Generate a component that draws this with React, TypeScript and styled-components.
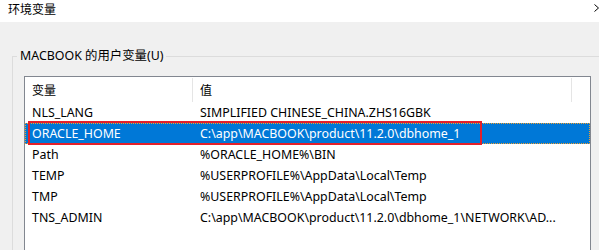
import React from 'react';
import styled, { createGlobalStyle } from 'styled-components';

const GlobalStyle = createGlobalStyle`
  html, body {
    margin: 0;
    padding: 0;
    background: #f0f0f0;
  }
  body {
    font-family: 'Noto Sans', 'Noto Sans CJK SC', sans-serif;
    font-size: 12.4px;
    color: #000;
  }
`;

interface Variable {
  name: string;
  value: string;
}

const variables: Variable[] = [
  { name: 'NLS_LANG', value: 'SIMPLIFIED CHINESE_CHINA.ZHS16GBK' },
  { name: 'ORACLE_HOME', value: 'C:\\app\\MACBOOK\\product\\11.2.0\\dbhome_1' },
  { name: 'Path', value: '%ORACLE_HOME%\\BIN' },
  { name: 'TEMP', value: '%USERPROFILE%\\AppData\\Local\\Temp' },
  { name: 'TMP', value: '%USERPROFILE%\\AppData\\Local\\Temp' },
  { name: 'TNS_ADMIN', value: 'C:\\app\\MACBOOK\\product\\11.2.0\\dbhome_1\\NETWORK\\AD...' }
];

const selectedIndex = 1;

const Window = styled.div`
  width: 599px;
  height: 250px;
  overflow: hidden;
  background: #f0f0f0;
`;

const TitleBar = styled.div`
  height: 22px;
  background: #fff;
  display: flex;
  align-items: center;
  justify-content: space-between;
  padding-left: 8px;
  box-sizing: border-box;
  line-height: 16px;
`;

const Title = styled.span`
  font-family: 'Noto Sans CJK SC', sans-serif;
  font-size: 12px;
  margin-top: -4px;
`;

const CloseGlyph = styled.svg`
  width: 5px;
  height: 8px;
  margin-top: -6px;
  flex: none;
`;

const Body = styled.div`
  padding: 26px 0 0 12px;
`;

const GroupBox = styled.fieldset`
  margin: 0;
  width: 600px;
  border: 1px solid #dcdcdc;
  padding: 12px 0 0 11px;
  box-sizing: border-box;
  height: 260px;
`;

const Legend = styled.legend`
  padding: 0 3px;
  margin-left: -7px;
  line-height: 16px;
`;

const ListView = styled.div`
  position: relative;
  width: 567px;
  height: 200px;
  box-sizing: border-box;
  border: 1px solid #828790;
  background: #fff;
`;

const HeaderRow = styled.div`
  display: grid;
  grid-template-columns: 168px 379px;
  height: 25px;
`;

const HeaderCell = styled.div`
  display: flex;
  align-items: center;
  padding-left: 7px;
  font-family: 'Noto Sans CJK SC', sans-serif;
  font-size: 12px;
  border-right: 1px solid #e5e5e5;
  margin: 1px 0 0;
  line-height: 16px;
`;

const Row = styled.div<{ $selected?: boolean }>`
  display: grid;
  grid-template-columns: 168px 379px;
  height: 21px;
  box-sizing: border-box;
  background: ${p => (p.$selected ? '#0078d7' : 'transparent')};
  color: ${p => (p.$selected ? '#fff' : '#000')};
  outline: ${p => (p.$selected ? '1px dotted #f0a030' : 'none')};
  outline-offset: -1px;
`;

const Cell = styled.div`
  display: flex;
  align-items: center;
  padding-left: 7px;
  white-space: nowrap;
  overflow: hidden;
`;

const Highlight = styled.div`
  position: absolute;
  left: 3px;
  top: 44px;
  width: 454px;
  height: 24px;
  box-sizing: border-box;
  border: 2px solid #e4202a;
  pointer-events: none;
`;

export default function App (): React.ReactElement {
  return (
    <Window>
      <GlobalStyle />
      <TitleBar>
        <Title>环境变量</Title>
        <CloseGlyph viewBox='0 0 5 8'>
          <path d='M0.5 0.5 L4.5 4 L0.5 7.5' fill='none' stroke='#000' strokeWidth='1' />
        </CloseGlyph>
      </TitleBar>
      <Body>
        <GroupBox>
          <Legend>MACBOOK 的用户变量(U)</Legend>
          <ListView>
            <HeaderRow>
              <HeaderCell>变量</HeaderCell>
              <HeaderCell>值</HeaderCell>
            </HeaderRow>
            {variables.map((v, i) => (
              <Row key={v.name} $selected={i === selectedIndex}>
                <Cell>{v.name}</Cell>
                <Cell>{v.value}</Cell>
              </Row>
            ))}
            <Highlight />
          </ListView>
        </GroupBox>
      </Body>
    </Window>
  );
}
